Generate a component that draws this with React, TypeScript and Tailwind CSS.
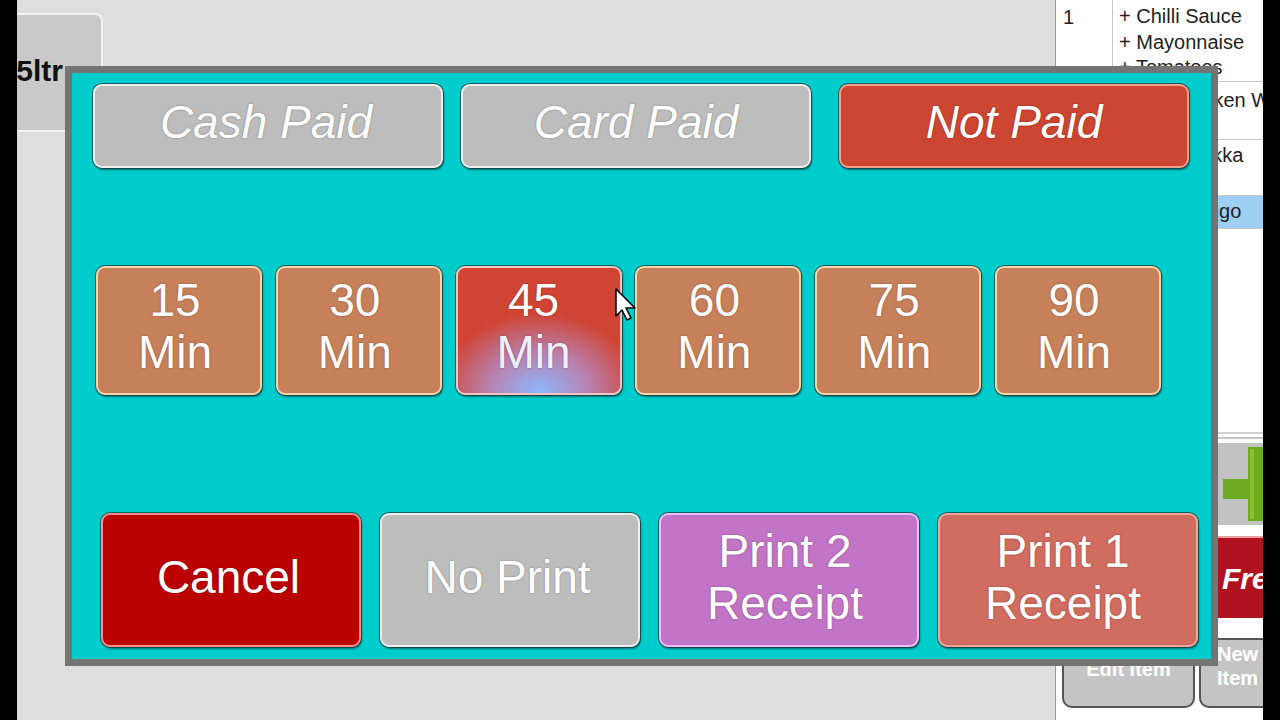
import React from "react";

const base =
  "flex flex-col items-center justify-center rounded-[9px] border-2 text-white text-[46px] leading-[52px] text-center shadow-[0_0_0_1px_rgba(20,60,60,0.75),1px_2px_2px_rgba(0,0,0,0.45)] [text-shadow:0_0_2px_rgba(0,0,0,0.35)]";

function Btn({ className, children }: { className: string; children: React.ReactNode }) {
  return <div className={`${base} ${className}`}>{children}</div>;
}

const orange = "w-[166px] h-[129px] pb-[10px] pr-[8px] bg-[#c6805a] border-[#f6d6a8] text-[#fff8f0]";

export default function App() {
  return (
    <div className="relative flex w-[1280px] h-[720px] overflow-hidden bg-black font-['Liberation_Sans',Arial,sans-serif]">
      <div className="w-[17px] shrink-0 bg-black" />
      {/* background page */}
      <div className="flex flex-1 bg-[#dedede]">
        {/* left column */}
        <div className="w-[86px] shrink-0 pt-[13px]">
          <div className="flex h-[117px] items-center justify-end overflow-hidden rounded-tr-[8px] border-r-2 border-t-2 border-[#f2f2f2] bg-[#c9c9c9] pb-[4px]">
            <span className="mr-[38px] whitespace-nowrap text-[30px] font-bold text-[#111]">1.5ltr</span>
          </div>
          <div className="h-[2px] bg-[#f4f4f4]" />
        </div>
        <div className="flex-1" />
        {/* right panel */}
        <div className="flex w-[208px] shrink-0 flex-col overflow-hidden border-l border-[#9a9a9a] bg-white text-[20px] text-[#222]">
          <div className="flex h-[82px] shrink-0 border-b border-[#c8c8c8]">
            <div className="w-[57px] shrink-0 border-r border-[#c8c8c8] pl-[7px] pt-[4px] leading-[26px]">1</div>
            <div className="h-[82px] overflow-hidden whitespace-nowrap pl-[6px] pt-[4px] leading-[25.5px]">
              <div>+ Chilli Sauce</div>
              <div>+ Mayonnaise</div>
              <div>+ Tomatoes</div>
            </div>
          </div>
          <div className="flex h-[58px] shrink-0 border-b border-[#c8c8c8]">
            <div className="w-[57px] shrink-0 border-r border-[#c8c8c8]" />
            <div className="overflow-hidden whitespace-nowrap pl-[6px] pt-[5px] leading-[26px]">Spicy Chicken Wings</div>
          </div>
          <div className="flex h-[56px] shrink-0 border-b border-[#c8c8c8]">
            <div className="w-[57px] shrink-0 border-r border-[#c8c8c8]" />
            <div className="whitespace-nowrap pl-[6px] pt-[2px] leading-[26px]">Chicken Tikka</div>
          </div>
          <div className="flex h-[33px] shrink-0 border-b border-[#c8c8c8] bg-[#9fd0f4]">
            <div className="w-[57px] shrink-0" />
            <div className="whitespace-nowrap pl-[6px] pt-[2px] leading-[26px]">Sweet Mango</div>
          </div>
          <div className="h-[203px] shrink-0" />
          <div className="h-[2px] shrink-0 bg-[#d0d0d0]" />
          <div className="h-[3px] shrink-0" />
          <div className="h-[2px] shrink-0 bg-[#c4c4c4]" />
          <div className="mt-[4px] flex h-[82px] shrink-0 items-center justify-end bg-[#c2c2c2] pr-0">
            <svg width="44" height="78" viewBox="0 0 44 78" className="mr-[-2px]">
              <path d="M27 2h17v74H27V54H2V34h25z" fill="#6cab1f" />
              <path d="M29 4h4v70h-4z" fill="#84c030" />
            </svg>
          </div>
          <div className="h-[11px] shrink-0" />
          <div className="flex h-[82px] shrink-0 items-center border-t-2 border-[#f0a0a0] bg-[#b0121f] pl-[166px]">
            <span className="whitespace-nowrap text-[30px] font-bold italic text-white">Free</span>
          </div>
          <div className="h-[20px] shrink-0" />
          <div className="flex flex-1 gap-[4px] pl-[6px]">
            <div className="flex h-[70px] w-[133px] shrink-0 items-start justify-center rounded-b-[10px] border-2 border-t-0 border-[#555] bg-[#c4c4c4] pt-[16px]">
              <span className="text-[20px] font-bold text-white">Edit Item</span>
            </div>
            <div className="flex h-[70px] w-[80px] shrink-0 flex-col items-start rounded-b-[10px] rounded-t-[6px] border-2 border-[#555] bg-[#c4c4c4] pl-[16px] pt-[2px] text-[20px] font-bold leading-[24px] text-white">
              <span>New</span>
              <span>Item</span>
            </div>
          </div>
        </div>
      </div>
      <div className="w-[17px] shrink-0 bg-black" />

      {/* dialog */}
      <div className="absolute left-[65px] top-[66px] flex h-[600px] w-[1153px] flex-col border-[7px] border-[#747474] bg-[#00cccc]">
        <div className="flex pl-[21px] pt-[11px]">
          <Btn className="h-[84px] w-[350px] pb-[8px] pr-[4px] bg-[#bdbdbd] border-[#eeeeee] italic">Cash Paid</Btn>
          <Btn className="ml-[18px] h-[84px] w-[350px] pb-[8px] bg-[#bdbdbd] border-[#eeeeee] italic">Card Paid</Btn>
          <Btn className="ml-[28px] h-[84px] w-[350px] pb-[8px] bg-[#cc4632] border-[#f4a08a] italic text-[#fff4f0]">Not Paid</Btn>
        </div>
        <div className="mt-[98px] flex gap-[13.8px] pl-[24px]">
          <Btn className={orange}>
            <span>15</span>
            <span>Min</span>
          </Btn>
          <Btn className={orange}>
            <span>30</span>
            <span>Min</span>
          </Btn>
          <Btn className="h-[129px] w-[166px] pb-[10px] pr-[10px] border-[#f3c4c0] bg-[radial-gradient(ellipse_100px_80px_at_50%_100%,#8cb8ff_0%,#b882b0_50%,#d04434_100%)] text-[#fff4f0]">
            <span>45</span>
            <span className="text-[#eef0ff]">Min</span>
          </Btn>
          <Btn className={orange}>
            <span>60</span>
            <span>Min</span>
          </Btn>
          <Btn className={orange}>
            <span>75</span>
            <span>Min</span>
          </Btn>
          <Btn className={orange}>
            <span>90</span>
            <span>Min</span>
          </Btn>
        </div>
        <div className="mt-[118px] flex gap-[19px] pl-[29px]">
          <Btn className="h-[134px] w-[260px] pb-[6px] pr-[5px] bg-[#bb0000] border-[#ff8c8c]">Cancel</Btn>
          <Btn className="h-[134px] w-[260px] pb-[6px] pr-[5px] bg-[#bdbdbd] border-[#eeeeee]">No Print</Btn>
          <Btn className="h-[134px] w-[260px] pb-[6px] pr-[8px] bg-[#c274c6] border-[#f4bcfa]">
            <span>Print 2</span>
            <span>Receipt</span>
          </Btn>
          <Btn className="h-[134px] w-[260px] pb-[6px] pr-[10px] bg-[#d06c60] border-[#f4a89c] text-[#fff4f0]">
            <span>Print 1</span>
            <span>Receipt</span>
          </Btn>
        </div>
      </div>

      {/* mouse cursor */}
      <svg className="absolute left-[615px] top-[288px]" width="22" height="34" viewBox="0 0 22 34">
        <path d="M1 1v27l6-6 5 10 4-2-5-10h9z" fill="#fff" stroke="#000" strokeWidth="1.5" strokeLinejoin="round" />
      </svg>
    </div>
  );
}
